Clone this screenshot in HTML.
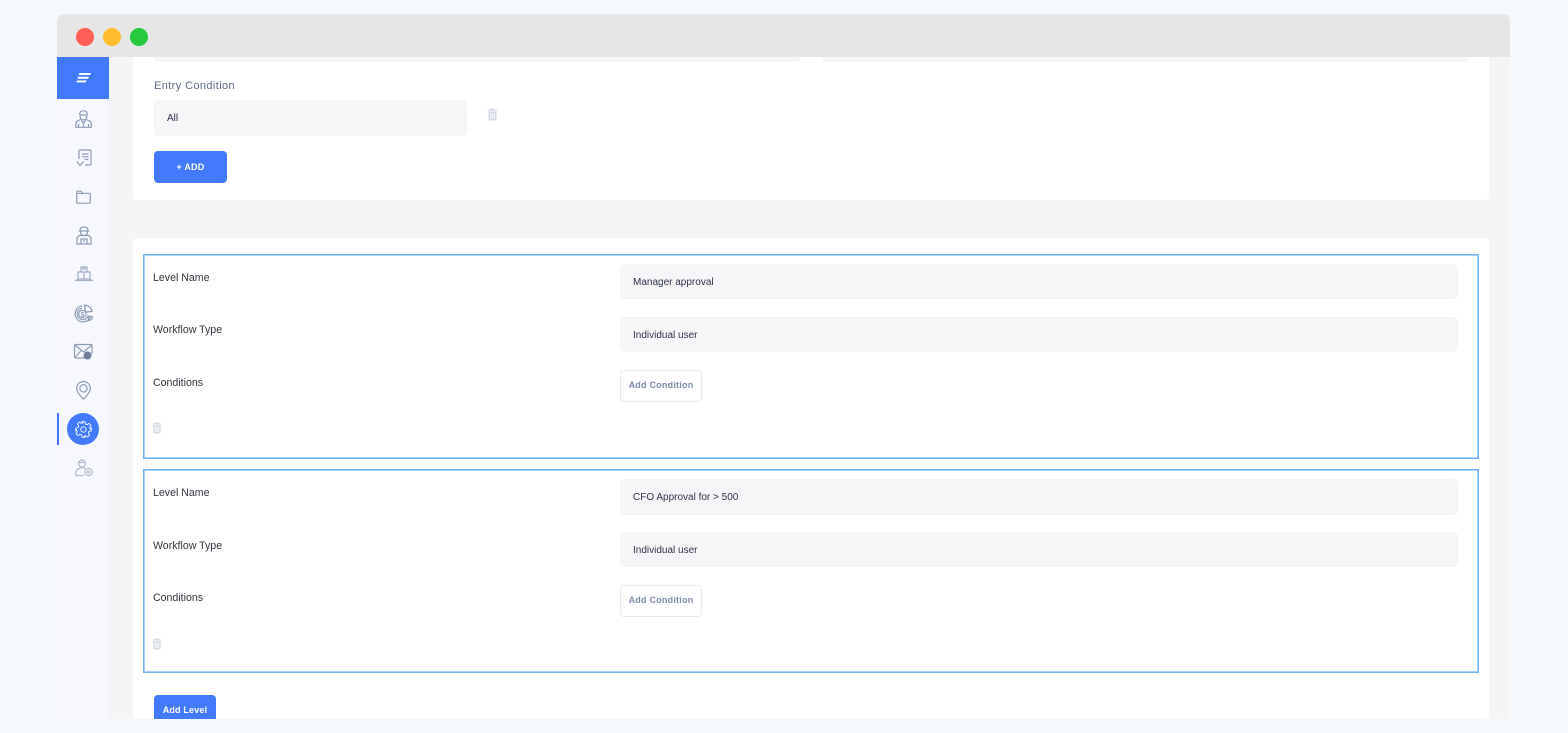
<!DOCTYPE html>
<html>
<head>
<meta charset="utf-8">
<style>
html,body{margin:0;padding:0;width:1568px;height:733px;overflow:hidden;background:#f5f9fe;font-family:"Liberation Sans",sans-serif}
.a{position:absolute;box-sizing:border-box}
.win{left:57px;top:14px;width:1453px;height:705px;overflow:hidden;border-radius:7px 7px 0 0;background:#f5f5f6}
.bar{left:57px;top:14px;width:1453px;height:43px;background:#e6e6e6;border-radius:7px 7px 0 0;z-index:5}
.dot{width:18px;height:18px;border-radius:50%;top:28px;z-index:6}
.side{left:57px;top:57px;width:52px;height:662px;background:#f6f8fe}
.logo{left:57px;top:57px;width:52px;height:42px;background:#4279fd}
.card{background:#fff;left:133px;width:1356px;border-radius:4px}
.inp{background:#f6f6f8;border:1px solid #f3f3f6;border-radius:5px;font-size:10px;color:#2f3349;line-height:33px;padding-left:12px;padding-top:1px}
.lab{font-size:10.600px;color:#33363f;left:153px;line-height:14px;white-space:nowrap}
.box{left:143px;width:1336px;border:1px solid #74b2f8;box-shadow:inset 0 0 0 1px #a9cffb}
.cond{left:620px;width:82px;height:32px;background:#fff;border:1px solid #e9eaef;border-radius:4px;font-size:9px;font-weight:bold;color:#7d8ba8;text-align:center;line-height:29px;letter-spacing:.22px}
.btn{background:#4279fd;color:#fff;border-radius:4px;font-weight:bold;text-align:center;left:154px;font-size:9px}
svg{position:absolute;overflow:visible}
svg.i{fill:none;stroke:#8e9cb4;stroke-width:1.2}
svg.t{fill:#d4d8e4;stroke:none}
</style>
</head>
<body>
<div class="a win"></div>
<div class="a side"></div>

<!-- first card -->
<div class="a card" style="top:50px;height:150px"></div>
<div class="a" style="left:154px;top:50px;width:646px;height:12px;background:#f6f6f8;border-radius:0 0 4px 4px"></div>
<div class="a" style="left:822px;top:50px;width:646px;height:12px;background:#f6f6f8;border-radius:0 0 4px 4px"></div>
<div class="a" style="left:154px;top:79px;font-size:11px;color:#5f6b88;letter-spacing:.39px;line-height:14px;white-space:nowrap">Entry Condition</div>
<div class="a inp" style="left:154px;top:100px;width:313px;height:36px">All</div>
<svg class="t" style="left:487px;top:108px" width="11" height="13" viewBox="0 0 11 13"><path d="M3.500 1.500V.5h4v1H10.500v1.200H.5V1.500zM1.300 3.500h8.400l-.5 9H1.800zM3.300 5v6h.9V5zm1.800 0v6h.9V5zm1.800 0v6h.9V5z" fill-rule="evenodd"/></svg>
<div class="a btn" style="top:151px;width:73px;height:32px;line-height:33px;letter-spacing:.2px">+ ADD</div>

<!-- second card -->
<div class="a card" style="top:238px;height:481px"></div>

<!-- level 1 -->
<div class="a box" style="top:254px;height:205px"></div>
<div class="a lab" style="top:271px">Level Name</div>
<div class="a inp" style="left:620px;top:264px;width:838px;height:35px">Manager approval</div>
<div class="a lab" style="top:323px">Workflow Type</div>
<div class="a inp" style="left:620px;top:317px;width:838px;height:35px">Individual user</div>
<div class="a lab" style="top:376px">Conditions</div>
<div class="a cond" style="top:370px">Add Condition</div>
<svg class="t" style="left:152px;top:422px" width="10" height="12" viewBox="0 0 11 13"><path d="M3.500 1.500V.5h4v1H10.500v1.200H.5V1.500zM1.300 3.500h8.400l-.5 9H1.800zM3.300 5v6h.9V5zm1.800 0v6h.9V5zm1.800 0v6h.9V5z" fill-rule="evenodd"/></svg>

<!-- level 2 -->
<div class="a box" style="top:469px;height:204px"></div>
<div class="a lab" style="top:486px">Level Name</div>
<div class="a inp" style="left:620px;top:479px;width:838px;height:36px">CFO Approval for &gt; 500</div>
<div class="a lab" style="top:539px">Workflow Type</div>
<div class="a inp" style="left:620px;top:532px;width:838px;height:35px">Individual user</div>
<div class="a lab" style="top:591px">Conditions</div>
<div class="a cond" style="top:585px">Add Condition</div>
<svg class="t" style="left:152px;top:638px" width="10" height="12" viewBox="0 0 11 13"><path d="M3.500 1.500V.5h4v1H10.500v1.200H.5V1.500zM1.300 3.500h8.400l-.5 9H1.800zM3.300 5v6h.9V5zm1.800 0v6h.9V5zm1.800 0v6h.9V5z" fill-rule="evenodd"/></svg>

<div class="a btn" style="top:695px;width:62px;height:24px;line-height:31px;overflow:hidden;border-radius:4px 4px 0 0;letter-spacing:.17px">Add Level</div>

<!-- title bar -->
<div class="a bar"></div>
<div class="a dot" style="left:76px;background:#ff5f56"></div>
<div class="a dot" style="left:103px;background:#ffbd2e"></div>
<div class="a dot" style="left:130px;background:#27c93f"></div>

<!-- sidebar -->
<div class="a logo"></div>
<svg style="left:76px;top:72px" width="16" height="12" viewBox="0 0 16 12" fill="#fff"><path d="M3.500 1h11.500l-.8 2H2.700zM2 4.800h11l-.7 1.900H1.300zM1 8.500h9.500l-.7 1.900H.3z"/></svg>

<!-- user -->
<svg class="i" style="left:75px;top:110px" width="17" height="18" viewBox="0 0 17 18"><path d="M4.800 5V3.500Q5 .8 8.500.8T12.200 3.500V5M4.800 5h7.400M5 5.500Q5 10 8.500 10T12 5.500M5.400 9.500L1.800 11.300C.9 11.800.7 13 .7 17.300h15.600c0-4.300-.2-5.500-1.100-6L11.600 9.500M6.300 10.500l2.200 3 2.200-3M8.500 13.500v3.800M3.500 14v3.300M13.500 14v3.300"/></svg>
<!-- doc -->
<svg class="i" style="left:76px;top:149px" width="16" height="18" viewBox="0 0 16 18"><path d="M3 10V2.500Q3 1 4.500 1h9Q15 1 15 2.500v12q0 1.500-1.500 1.500H9M6 5h6.500M6 7.800h6.500M8.500 10.500h4M.8 12.500l3.200 4 3.500-4"/></svg>
<!-- folder -->
<svg class="i" style="left:76px;top:190px" width="15" height="14" viewBox="0 0 15 14"><path d="M.7 3.500V12q0 1.200 1.200 1.200h11.200q1.200 0 1.200-1.200V4.500q0-1.200-1.200-1.200H6.500L5.200 1.200H1.900Q.7 1.200.7 2.400zM.7 3.500h5.800"/></svg>
<!-- agent -->
<svg class="i" style="left:76px;top:226px" width="16" height="19" viewBox="0 0 16 19"><path d="M4.200 5V3.500Q4.500 1 8 1T11.800 3.500V5M2.800 5h10.400M4.500 5.500Q4.500 9.500 8 9.500T11.500 5.500M1 18v-5q0-3 3-3.500h8q3 .5 3 3.500v5zM5 18v-5h6v5M7 15h2"/></svg>
<!-- boxes -->
<svg class="i" style="left:75px;top:266px;stroke:#a3afc4" width="18" height="17" viewBox="0 0 18 17"><path d="M6 1h6v5H6zM3 6h6v7H3zM9 6h6v7H9zM8 1v2h2V1M0 14.500h18M2 13v1.500M16 13v1.500"/></svg>
<!-- money -->
<svg class="i" style="left:74px;top:304px" width="19" height="19" viewBox="0 0 19 19"><path d="M8 2A8 8 0 1 0 16.500 13M8 4.300A5.700 5.700 0 1 0 14.200 12"/><circle cx="8.500" cy="10" r="3.700"/><path d="M10.500 1.200Q17 1.500 18 7.500l-6.500 .6zM14 12l4.500.8Q18 16 15 16.500z"/><text x="8.500" y="12.300" font-family="Liberation Sans" font-size="6.500" font-weight="bold" text-anchor="middle" fill="#8e9cb4" stroke="none">$</text></svg>
<!-- mail -->
<svg class="i" style="left:74px;top:344px" width="19" height="16" viewBox="0 0 19 16"><path d="M12 14H2Q.5 14 .5 12.500V2Q.5.500 2 .500h15Q18 .500 18 2v8M.8 1l8.700 7L18 1M.8 13.500l6-6.500"/><circle cx="13.500" cy="11.500" r="4" fill="#6f7f9b" stroke="none"/></svg>
<!-- pin -->
<svg class="i" style="left:76px;top:381px" width="15" height="19" viewBox="0 0 15 19"><path d="M7.500 18.300C3 13.500.7 10.500.7 7.300a6.800 6.800 0 0 1 13.600 0c0 3.200-2.300 6.200-6.800 11z"/><circle cx="7.500" cy="7.300" r="3.700"/></svg>
<!-- active gear -->
<div class="a" style="left:57px;top:413px;width:2px;height:32px;background:#4279fd"></div>
<div class="a" style="left:67px;top:413px;width:32px;height:32px;border-radius:50%;background:#4279fd"></div>
<svg style="left:74.500px;top:420.500px;fill:none;stroke:#fff;stroke-width:1.200" width="17" height="17" viewBox="0 0 24 24"><circle cx="12" cy="12" r="3.800"/><path d="M10 1h4l.6 3.300 2.300 1 2.800-1.900 2.900 2.900-1.900 2.800 1 2.300L23 10v4l-3.300.6-1 2.300 1.900 2.800-2.900 2.900-2.800-1.900-2.300 1L14 23h-4l-.6-3.300-2.300-1-2.800 1.900-2.900-2.900 1.900-2.800-1-2.300L1 14v-4l3.300-.6 1-2.300-1.900-2.800 2.900-2.900 2.800 1.900 2.300-1z"/></svg>
<!-- user settings -->
<svg class="i" style="left:75px;top:459px;stroke:#b1bbcc" width="18" height="18" viewBox="0 0 18 18"><circle cx="7" cy="4.500" r="3.500"/><path d="M3.500 3.500h7M.7 16.500v-2.500q0-3 3-4l1.500-1.200h3.600l1.500 1M.7 16.500h8"/><circle cx="13.500" cy="13" r="3.700"/><circle cx="13.500" cy="13" r="1.200"/></svg>
</body>
</html>
